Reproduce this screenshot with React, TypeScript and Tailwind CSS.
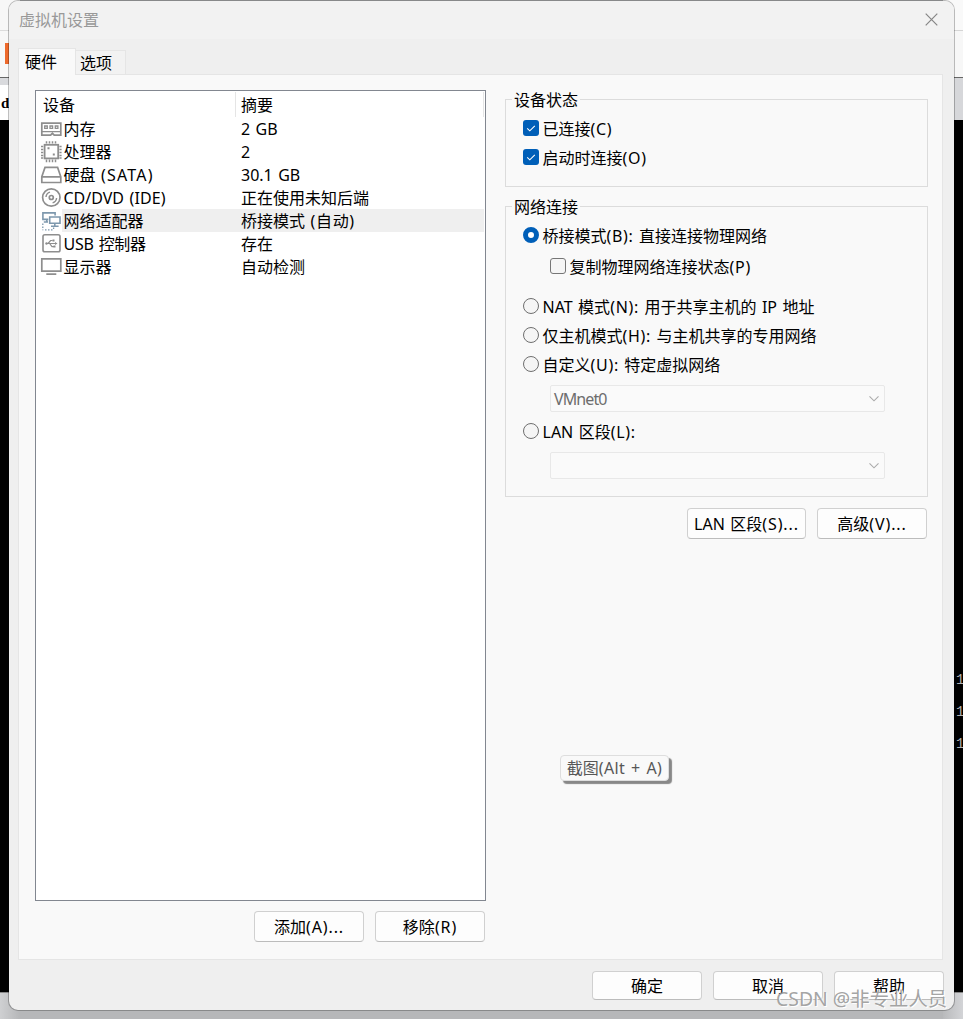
import React from 'react';

const icon = 'h-[22px] w-[22px] shrink-0';

function MemoryIcon() {
  return (
    <svg className={icon} viewBox="0 0 22 22" fill="none" stroke="#8e8e8e" strokeWidth="1.7">
      <path d="M1.8 5.2h19v12h-6.6l-1.8-1.9-1.8 1.9H1.8z" />
      <path d="M4.7 8h2.6v2.4H4.7zM10 8h2.6v2.4H10zM15.3 8h2.6v2.4h-2.6zM2 13.6h18.6" strokeWidth="1.3" />
    </svg>
  );
}

function CpuIcon() {
  return (
    <svg className={icon} viewBox="0 0 22 22" fill="none" stroke="#8e8e8e">
      <rect x="4.6" y="3.8" width="13.6" height="13.6" strokeWidth="1.8" />
      <path d="M6.5.2v2.4M9.5.2v2.4M12.5.2v2.4M15.5.2v2.4M6.5 18.6v2.6M9.5 18.6v2.6M12.5 18.6v2.6M15.5 18.6v2.6M1 5.5h2.2M1 8.5h2.2M1 11.5h2.2M1 14.5h2.2M1 17h2.2M19.4 5.5h2.2M19.4 8.5h2.2M19.4 11.5h2.2M19.4 14.5h2.2M19.4 17h2.2" strokeWidth="1.5" />
      <path d="M7.5 7.3h2M12.8 13.6h2" strokeWidth="2" />
    </svg>
  );
}

function DiskIcon() {
  return (
    <svg className={icon} viewBox="0 0 22 22" fill="none" stroke="#8e8e8e" strokeWidth="1.7">
      <path d="M1.8 12.8 5 3.4h12.6l3.2 9.4v5.7h-19zM1.8 12.8h19" />
    </svg>
  );
}

function DiscIcon() {
  return (
    <svg className={icon} viewBox="0 0 22 22" fill="none" stroke="#8e8e8e" strokeWidth="1.7">
      <circle cx="11.3" cy="10.5" r="8.7" />
      <circle cx="11.3" cy="10.5" r="2" />
      <path d="M6 10a5.5 5.5 0 0 1 4-4.8M16.6 11a5.5 5.5 0 0 1-4 4.8" strokeWidth="1.4" />
    </svg>
  );
}

function NetworkIcon() {
  return (
    <svg className={icon} viewBox="0 0 22 22" fill="none" stroke="#7d98ad" strokeWidth="1.6">
      <path d="M8.3 9.4H2.9V2.9h12.2v2.6M6.8 9.6v2.2M3.8 12H8" />
      <path d="M9.7 7h10.3v6.2H9.7zM14.8 13.5v2.4M11 16.2h7.6" />
      <path d="M2.8 13.5v6.8M5 19.8h9M13.6 17.5v1.4" strokeWidth="1.3" strokeDasharray="1.5 1.5" />
    </svg>
  );
}

function UsbIcon() {
  return (
    <svg className={icon} viewBox="0 0 22 22" fill="none" stroke="#8e8e8e" strokeWidth="1.6">
      <rect x="3" y="1.8" width="17" height="17" rx="1.8" />
      <path d="M6.5 10.5h9.5M8 10.5l2.6-3h2M9.6 10.5l2.4 3.2h2" strokeWidth="1.2" />
      <circle cx="6.5" cy="10.5" r="1.2" fill="#8e8e8e" stroke="none" />
      <path d="M15 9l2.5 1.5L15 12zM12.5 6.5h2v2h-2zM13.5 12.5h2v2h-2z" fill="#8e8e8e" stroke="none" />
    </svg>
  );
}

function DisplayIcon() {
  return (
    <svg className={icon} viewBox="0 0 22 22" fill="none" stroke="#8e8e8e" strokeWidth="1.7">
      <path d="M1.8 2.9h19v12.2h-19zM6.3 18.2h10" />
    </svg>
  );
}

/** Sets bracketed parts and trailing dots slightly wider than the text around them. */
function Label({ text, wide = 'tracking-[0.7px]', rest = '' }: { text: string; wide?: string; rest?: string }) {
  return (
    <span className={`[word-spacing:1.3px] ${rest}`}>
      {text.split(/(\([^)]*\)[:.]*)/).map((part, i) => (
        <span key={i} className={i % 2 ? wide : ''}>
          {part}
        </span>
      ))}
    </span>
  );
}

const devices = [
  { icon: <MemoryIcon />, name: '内存', summary: '2 GB' },
  { icon: <CpuIcon />, name: '处理器', summary: '2' },
  { icon: <DiskIcon />, name: '硬盘 (SATA)', summary: '30.1 GB', wide: 'tracking-[1.2px]' },
  { icon: <DiscIcon />, name: 'CD/DVD (IDE)', summary: '正在使用未知后端', wide: 'tracking-[0.1px]' },
  { icon: <NetworkIcon />, name: '网络适配器', summary: '桥接模式 (自动)', selected: true },
  { icon: <UsbIcon />, name: 'USB 控制器', summary: '存在', rest: 'tracking-[-0.3px]' },
  { icon: <DisplayIcon />, name: '显示器', summary: '自动检测' },
];

function Check({ checked, text }: { checked?: boolean; text: string }) {
  return (
    <div className="flex h-[16px] items-center">
      {checked ? (
        <span className="flex h-4 w-4 shrink-0 items-center justify-center rounded-[3px] bg-[#005fb8]">
          <svg className="h-4 w-4" viewBox="0 0 16 16" fill="none" stroke="white" strokeWidth="1.1">
            <path d="M4.2 8.3 6.8 10.8 11.8 5.8" />
          </svg>
        </span>
      ) : (
        <span className="h-4 w-4 shrink-0 rounded-[3px] border border-[#767676] bg-[#f5f5f5]" />
      )}
      <span className="relative top-px pl-[3.5px]">
        <Label text={text} />
      </span>
    </div>
  );
}

function Radio({ checked, text }: { checked?: boolean; text: string }) {
  return (
    <div className="flex h-[16px] items-center">
      <span
        className={
          checked
            ? 'h-4 w-4 shrink-0 rounded-full border-[5px] border-[#005fb8] bg-white'
            : 'h-4 w-4 shrink-0 rounded-full border border-[#6f6f6f] bg-[#f5f5f5]'
        }
      />
      <span className="relative top-px pl-[3.5px]">
        <Label text={text} />
      </span>
    </div>
  );
}

function Select({ value }: { value?: string }) {
  return (
    <div className="ml-[27px] flex h-[27px] w-[335px] items-center justify-between rounded-[2px] border border-[#e8e8e8] bg-[#fafafa] pr-[4px] pl-[3px] text-[#6d6d6d]">
      <span className="tracking-[-0.9px]">{value}</span>
      <svg className="h-3 w-3" viewBox="0 0 12 12" fill="none" stroke="#aaa" strokeWidth="1.1">
        <path d="M1.5 3.3 6 7.8l4.5-4.5" />
      </svg>
    </div>
  );
}

function Button({ className, text }: { className: string; text: string }) {
  return (
    <button
      className={`flex items-center justify-center rounded-[4px] border border-[#d0d0d0] border-b-[#bcbcbc] bg-[#fdfdfd] ${className}`}
    >
      <Label text={text} wide="tracking-[0.9px]" />
    </button>
  );
}

function Group({ title, className, children }: { title: string; className: string; children: React.ReactNode }) {
  return (
    <section className={`flex w-[423px] flex-col border border-[#dcdcdc] pl-[17px] ${className}`}>
      <h2 className="-mt-[10px] -ml-[11px] flex h-5 items-center self-start bg-[#f9f9f9] px-[2px]">{title}</h2>
      {children}
    </section>
  );
}

function Backdrop() {
  return (
    <div className="flex h-full justify-between bg-[#b6b7b9]">
      <div className="flex w-5 flex-col">
        <div className="h-[30px] bg-[#f7f7f7]" />
        <div className="h-[47px] border-t border-[#dcdcdc] bg-[#f8f8f8] pt-3 pl-[5px]">
          <div className="h-[21px] bg-[#ee6a2c]" />
        </div>
        <div className="h-[8px] border-t border-[#666] bg-[#d9dadd]" />
        <div className="h-[35px] bg-white pt-[10px] pl-px font-['Liberation_Serif',serif] text-[15px] leading-4 font-bold">d</div>
        <div className="h-[872px] bg-black" />
        <div className="grow border-t border-[#888] bg-gradient-to-r from-[#cfd0d2] to-[#b6b7b9]" />
      </div>
      <div className="flex w-5 flex-col">
        <div className="h-[30px] bg-[#f9f9f9]" />
        <div className="h-[47px] border-t border-[#d5d5d5] bg-[#f7f7f7]" />
        <div className="h-[43px] border-t border-[#666] bg-[#d6d7da]" />
        <div className="flex h-[872px] flex-col bg-black pt-[544px] pl-[13px] font-['Liberation_Mono',monospace] text-[14px] leading-8 text-[#b0b0b0]">
          <span>1</span>
          <span>1</span>
          <span>1</span>
        </div>
        <div className="grow border-t border-[#888] bg-gradient-to-r from-[#b9babc] to-[#d3d4d7]" />
      </div>
    </div>
  );
}

export default function App() {
  return (
    <div className="relative h-[1019px] w-[963px] overflow-hidden font-['Noto_Sans','Noto_Sans_CJK_SC',sans-serif] text-[16px] leading-5 whitespace-nowrap text-black">
      <Backdrop />
      <main className="absolute top-0 left-[8px] flex h-[1011px] w-[947px] flex-col rounded-[10px] border border-black/25 bg-[#efefef] bg-clip-padding">
        <header className="flex h-[38px] shrink-0 items-center justify-between rounded-t-[9px] bg-[#f2f2f2] pr-[16px] pb-px pl-[10px] text-[#999]">
          <span>虚拟机设置</span>
          <svg className="h-[13px] w-[13px]" viewBox="0 0 13 13" fill="none" stroke="#858585" strokeWidth="1.2">
            <path d="M.7.7l11.6 11.6M12.3.7.7 12.3" />
          </svg>
        </header>

        <nav className="mt-[9px] ml-[9px] flex h-[26px] shrink-0 items-end">
          <div className="z-10 -mb-px flex h-[27px] w-[58px] items-center border border-b-0 border-[#e5e5e5] bg-[#f9f9f9] pb-px pl-[6px]">硬件</div>
          <div className="flex h-[24px] w-[50px] items-center border border-b-0 border-l-0 border-[#e5e5e5] bg-[#f2f2f2] pl-1">选项</div>
        </nav>

        <div className="ml-[9px] flex h-[886px] w-[925px] shrink-0 border border-[#e5e5e5] bg-[#f9f9f9] pt-[15px] pl-[16px]">
          <div className="w-[451px]">
            <div className="h-[811px] border border-[#828790] bg-white">
              <div className="flex h-[26px] pt-px pr-px">
                <div className="flex w-[200px] items-center border-r border-[#e5e5e5] pt-px pl-[7px]">设备</div>
                <div className="flex grow items-center border-r border-[#e5e5e5] pt-px pl-[5px]">摘要</div>
              </div>
              {devices.map((d) => (
                <div key={d.name} className="flex h-[23px] items-center pr-px pl-[4px]">
                  {d.icon}
                  <div className={`flex h-full grow items-center pt-px ${d.selected ? 'bg-[#efefef]' : ''}`}>
                    <span className="w-[179px] pl-[1.5px]">
                      <Label text={d.name} wide={d.wide} rest={d.rest} />
                    </span>
                    <Label text={d.summary} />
                  </div>
                </div>
              ))}
            </div>
            <div className="mt-[10px] flex justify-end gap-[11px] pr-px">
              <Button className="h-[31px] w-[110px] pt-px" text="添加(A)..." />
              <Button className="h-[31px] w-[110px] pt-px" text="移除(R)" />
            </div>
          </div>

          <div className="relative ml-[19px] w-[423px] pt-[9px]">
            <Group title="设备状态" className="h-[88px]">
              <div className="mt-[10px] flex flex-col gap-[13px]">
                <Check checked text="已连接(C)" />
                <Check checked text="启动时连接(O)" />
              </div>
            </Group>
            <Group title="网络连接" className="mt-[19px] h-[291px]">
              <div className="mt-[10px]">
                <Radio checked text="桥接模式(B): 直接连接物理网络" />
              </div>
              <div className="mt-[15px] pl-[27px]">
                <Check text="复制物理网络连接状态(P)" />
              </div>
              <div className="mt-[24px] flex flex-col gap-[13px]">
                <Radio text="NAT 模式(N): 用于共享主机的 IP 地址" />
                <Radio text="仅主机模式(H): 与主机共享的专用网络" />
                <Radio text="自定义(U): 特定虚拟网络" />
                <Select value="VMnet0" />
              </div>
              <div className="mt-[11px] mb-[13px]">
                <Radio text="LAN 区段(L):" />
              </div>
              <Select />
            </Group>
            <div className="mt-[11px] flex justify-end gap-[11px] pr-px">
              <Button className="h-[31px] w-[119px] pt-px" text="LAN 区段(S)..." />
              <Button className="h-[31px] w-[110px] pt-px" text="高级(V)..." />
            </div>
            <div
              role="tooltip"
              className="absolute top-[665px] left-[55px] flex h-[26px] w-[109px] items-center justify-center rounded-[4px] border border-[#dedede] bg-[#f9f9f9] text-[#575757] shadow-[3px_3px_1px_#888]"
            >
              <Label text="截图(Alt + A)" wide="tracking-[0.4px]" />
            </div>
          </div>
        </div>

        <footer className="mt-[11px] mr-[10px] flex justify-end gap-[11px]">
          <Button className="h-[29px] w-[110px]" text="确定" />
          <Button className="h-[29px] w-[110px]" text="取消" />
          <Button className="h-[29px] w-[110px]" text="帮助" />
        </footer>
      </main>
      <div className="absolute top-[987px] left-[776px] text-[19.4px] leading-6 text-[#999]/90 [text-shadow:1px_1px_0_#fff]">CSDN @非专业人员</div>
    </div>
  );
}
